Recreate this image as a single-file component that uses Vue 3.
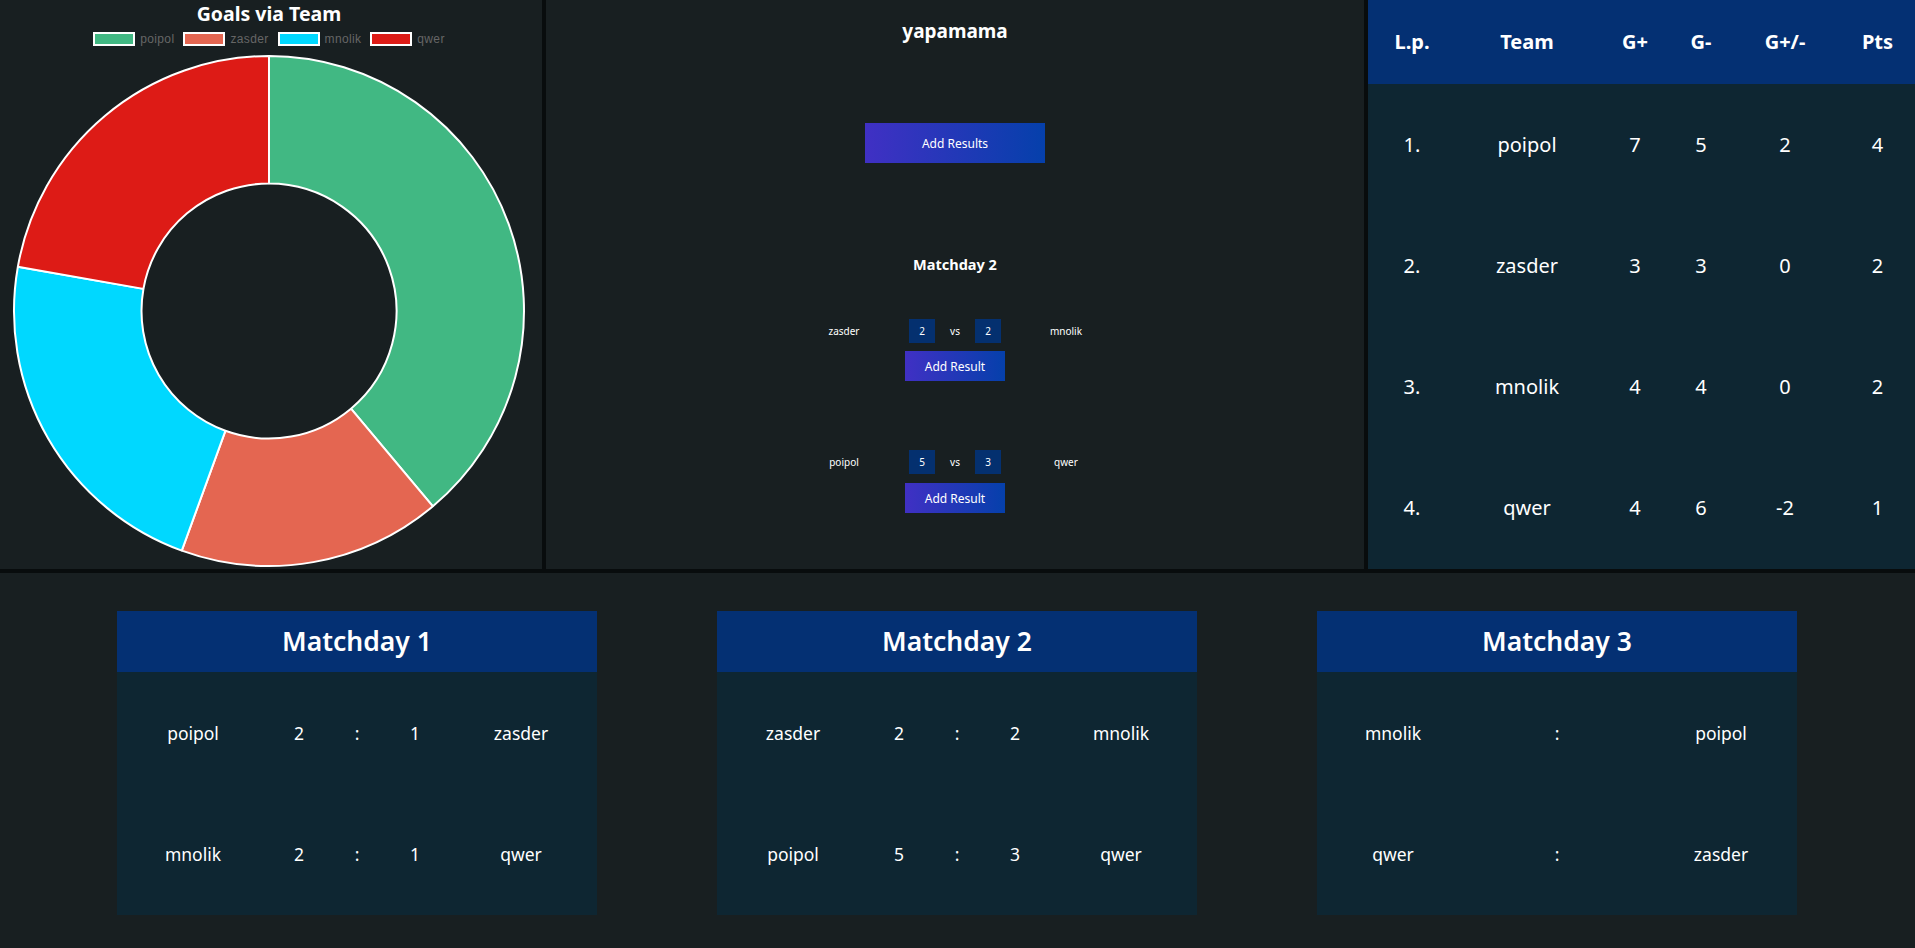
<template>
  <div class="page">
    <section class="top">
      <div class="chart-panel">
        <h2 class="chart-title">Goals via Team</h2>
        <div class="legend">
          <div v-for="s in slices" :key="s.name" class="legend-item">
            <span class="legend-box" :style="{ background: s.color }"></span>
            <span>{{ s.name }}</span>
          </div>
        </div>
        <svg class="donut" width="538" height="519" viewBox="0 0 538 519">
          <path v-for="s in arcs" :key="s.name" :d="s.d" :fill="s.color" stroke="#fff" stroke-width="2" stroke-linejoin="bevel" />
        </svg>
      </div>

      <div class="admin-panel">
        <h2 class="league-name">yapamama</h2>
        <button class="btn btn-wide">Add Results</button>
        <h3 class="current-day">Matchday 2</h3>
        <div v-for="m in currentMatches" :key="m.home" class="match-form">
          <div class="match-row">
            <span>{{ m.home }}</span>
            <span class="score-box">{{ m.homeGoals }}</span>
            <span>vs</span>
            <span class="score-box">{{ m.awayGoals }}</span>
            <span>{{ m.away }}</span>
          </div>
          <button class="btn btn-small">Add Result</button>
        </div>
      </div>

      <div class="table-panel">
        <div class="table-row table-head">
          <span v-for="h in headers" :key="h">{{ h }}</span>
        </div>
        <div v-for="(t, i) in standings" :key="t.name" class="table-row">
          <span>{{ i + 1 }}.</span>
          <span>{{ t.name }}</span>
          <span>{{ t.plus }}</span>
          <span>{{ t.minus }}</span>
          <span>{{ t.plus - t.minus }}</span>
          <span>{{ t.pts }}</span>
        </div>
      </div>
    </section>

    <section class="schedule">
      <div v-for="day in schedule" :key="day.title" class="day-card">
        <h2 class="day-title">{{ day.title }}</h2>
        <div v-for="g in day.games" :key="g[0]" class="game-row">
          <span>{{ g[0] }}</span>
          <span>{{ g[1] }}</span>
          <span>:</span>
          <span>{{ g[2] }}</span>
          <span>{{ g[3] }}</span>
        </div>
      </div>
    </section>
  </div>
</template>

<script setup>
import { computed } from 'vue'

const slices = [
  { name: 'poipol', value: 7, color: '#41b883' },
  { name: 'zasder', value: 3, color: '#e46651' },
  { name: 'mnolik', value: 4, color: '#00d8ff' },
  { name: 'qwer', value: 4, color: '#dd1b16' },
]

const headers = ['L.p.', 'Team', 'G+', 'G-', 'G+/-', 'Pts']

const standings = [
  { name: 'poipol', plus: 7, minus: 5, pts: 4 },
  { name: 'zasder', plus: 3, minus: 3, pts: 2 },
  { name: 'mnolik', plus: 4, minus: 4, pts: 2 },
  { name: 'qwer', plus: 4, minus: 6, pts: 1 },
]

const currentMatches = [
  { home: 'zasder', away: 'mnolik', homeGoals: 2, awayGoals: 2 },
  { home: 'poipol', away: 'qwer', homeGoals: 5, awayGoals: 3 },
]

const schedule = [
  { title: 'Matchday 1', games: [['poipol', 2, 1, 'zasder'], ['mnolik', 2, 1, 'qwer']] },
  { title: 'Matchday 2', games: [['zasder', 2, 2, 'mnolik'], ['poipol', 5, 3, 'qwer']] },
  { title: 'Matchday 3', games: [['mnolik', '', '', 'poipol'], ['qwer', '', '', 'zasder']] },
]

const CX = 269
const CY = 261
const OUTER = 255
const INNER = 127.5

function point(r, angle) {
  return `${(CX + r * Math.sin(angle)).toFixed(2)} ${(CY - r * Math.cos(angle)).toFixed(2)}`
}

function arcPath(from, to) {
  const large = to - from > Math.PI ? 1 : 0
  return [
    `M${point(OUTER, from)}`,
    `A${OUTER} ${OUTER} 0 ${large} 1 ${point(OUTER, to)}`,
    `L${point(INNER, to)}`,
    `A${INNER} ${INNER} 0 ${large} 0 ${point(INNER, from)}`,
    'Z',
  ].join(' ')
}

const arcs = computed(() => {
  const total = slices.reduce((sum, s) => sum + s.value, 0)
  let angle = 0
  return slices.map((s) => {
    const next = angle + (s.value / total) * Math.PI * 2
    const d = arcPath(angle, next)
    angle = next
    return { ...s, d }
  })
})
</script>

<style>
html,
body {
  margin: 0;
  background: #181f21;
}
</style>

<style scoped>
.page {
  width: 1915px;
  height: 948px;
  overflow: hidden;
  background: #181f21;
  color: #fff;
  font-family: "Noto Sans", sans-serif;
}

.top {
  display: flex;
  height: 569px;
  border-bottom: 4px solid #080c0d;
}

.chart-panel {
  width: 538px;
  padding-right: 4px;
  border-right: 4px solid #080c0d;
  display: flex;
  flex-direction: column;
  align-items: center;
}

.chart-title {
  margin: 0;
  font-size: 19.5px;
  line-height: 27px;
  font-weight: 700;
}

.legend {
  display: flex;
  gap: 9px;
  margin-top: 5px;
  height: 14px;
  font: 12px/14px "Liberation Sans", sans-serif;
  letter-spacing: 0.35px;
  color: #666;
}

.legend-item {
  display: flex;
  align-items: center;
  gap: 5px;
}

.legend-box {
  box-sizing: border-box;
  width: 42px;
  height: 14px;
  border: 2px solid #fff;
}

.donut {
  display: block;
  margin-top: 4px;
}

.admin-panel {
  width: 818px;
  border-right: 4px solid #080c0d;
  display: flex;
  flex-direction: column;
  align-items: center;
  padding-top: 18px;
}

.league-name {
  margin: 0;
  font-size: 19px;
  line-height: 26px;
  font-weight: 700;
}

.btn {
  display: block;
  border: 0;
  padding: 0;
  color: #fff;
  background: linear-gradient(to right, #4030c4, #0540ab);
  font-family: inherit;
  font-size: 12px;
}

.btn-wide {
  width: 180px;
  height: 40px;
  margin-top: 79px;
}

.current-day {
  margin: 91px 0 0;
  font-size: 14.5px;
  line-height: 20px;
  font-weight: 700;
}

.match-form {
  display: flex;
  flex-direction: column;
  align-items: center;
  margin-top: 45px;
}

.match-form + .match-form {
  margin-top: 69px;
}

.match-form + .match-form .btn-small {
  margin-top: 9px;
}

.match-row {
  display: grid;
  grid-template-columns: 130px 26px 40px 26px 130px;
  align-items: center;
  justify-items: center;
  font-size: 10px;
  line-height: 24px;
}

.score-box {
  width: 26px;
  height: 24px;
  text-align: center;
  background: #04306f;
}

.btn-small {
  width: 100px;
  height: 30px;
  margin-top: 8px;
}

.table-panel {
  flex: 1;
  display: grid;
  grid-template-rows: 84px repeat(4, 1fr);
  background: #0e2632;
}

.table-row {
  display: grid;
  grid-template-columns: 88px 142px 74px 58px 110px 75px;
  align-items: center;
  justify-items: center;
  font-size: 20px;
  padding-bottom: 1px;
}

.table-head {
  background: #043073;
  font-weight: 700;
  padding-bottom: 2px;
}

.schedule {
  display: flex;
  justify-content: space-between;
  padding: 38px 118px 0 117px;
}

.day-card {
  width: 480px;
  height: 304px;
  display: grid;
  grid-template-rows: 61px 1fr 1fr;
  background: #0e2632;
}

.day-title {
  margin: 0;
  background: #043073;
  font-size: 26.5px;
  font-weight: 600;
  line-height: 60px;
  text-align: center;
}

.game-row {
  display: grid;
  grid-template-columns: 152px 60px 56px 60px 152px;
  align-items: center;
  justify-items: center;
  font-size: 17.5px;
}
</style>
